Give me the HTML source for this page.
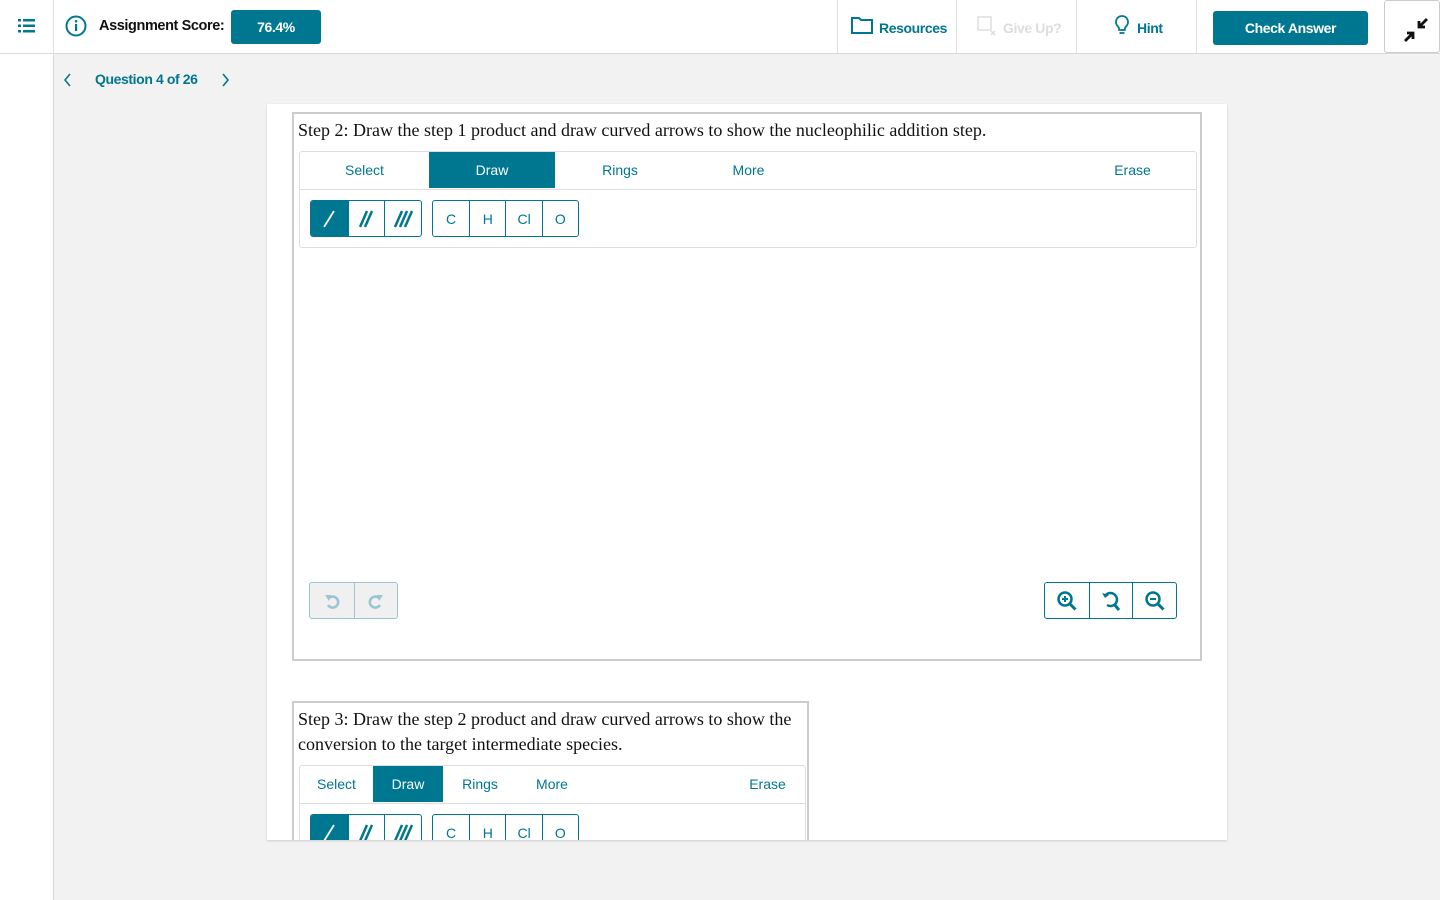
<!DOCTYPE html>
<html><head><style>
*{box-sizing:border-box;margin:0;padding:0}
body{width:1440px;height:900px;background:#f2f2f2;font-family:"Liberation Sans",sans-serif;position:relative;overflow:hidden;color:#007791}
.abs{position:absolute}
.top{left:0;top:0;width:1440px;height:54px;background:#fff;border-bottom:1px solid #d9d9d9}
.side{left:0;top:54px;width:54px;height:846px;background:#fff;border-right:1px solid #d9d9d9}
.vl{position:absolute;top:0;width:1px;height:53px;background:#e0e0e0}
.tb{font-weight:bold;font-size:14px;letter-spacing:-0.4px}
.card{left:267px;top:104px;width:960px;height:736px;background:#fff;overflow:hidden;box-shadow:0 1px 2px #ccc}
.box{position:absolute;border:2px solid #ccc;background:#fff}
.title{font-family:"Liberation Serif",serif;color:#111;font-size:18px;line-height:25px;position:absolute;left:4px}
.tool{position:absolute;border:1px solid #ddd;border-radius:3px}
.tab{position:absolute;top:0;height:36px;line-height:36px;text-align:center;font-size:14px;color:#007791}
.tab.on{background:#007791;color:#fff}
.grp{position:absolute;height:37px;border:1px solid #007791;border-radius:3px;display:flex;overflow:hidden}
.grp div{width:37px;border-left:1px solid #007791;display:flex;align-items:center;justify-content:center;font-size:14px;color:#007791}
.grp div:first-child{border-left:none}
.grp div.on{background:#007791}
</style></head><body>
<div class="abs top">
  <div class="vl" style="left:53px"></div>
  <svg class="abs" style="left:18px;top:18px" width="18" height="16" fill="#007791"><rect x="0" y="1" width="3" height="2.5"/><rect x="5" y="1" width="12" height="2.5"/><rect x="0" y="6.5" width="3" height="2.5"/><rect x="5" y="6.5" width="12" height="2.5"/><rect x="0" y="12" width="3" height="2.5"/><rect x="5" y="12" width="12" height="2.5"/></svg>
  <svg class="abs" style="left:65px;top:15px" width="22" height="22"><circle cx="11" cy="11" r="9.5" fill="none" stroke="#007791" stroke-width="2"/><rect x="10" y="9" width="2.2" height="7" fill="#007791"/><circle cx="11.1" cy="6.3" r="1.3" fill="#007791"/></svg>
  <div class="abs tb" style="left:99px;top:18px;color:#111;font-size:14.5px">Assignment Score:</div>
  <div class="abs tb" style="left:231px;top:10px;width:90px;height:34px;background:#007791;color:#fff;border-radius:3px;text-align:center;line-height:34px">76.4%</div>
  <div class="vl" style="left:837px"></div>
  <div class="vl" style="left:956px"></div>
  <div class="vl" style="left:1076px"></div>
  <div class="vl" style="left:1196px"></div>
  <svg class="abs" style="left:851px;top:16px" width="22" height="18"><path d="M1 2h7l2 2h11v13H1z" fill="none" stroke="#007791" stroke-width="2"/></svg>
  <div class="abs tb" style="left:879px;top:20px">Resources</div>
  <svg class="abs" style="left:977px;top:16px" width="20" height="20"><rect x="1" y="1" width="13" height="13" fill="none" stroke="#ddd" stroke-width="1.5"/><path d="M14 15l4 4M18 15l-4 4" stroke="#ddd" stroke-width="1.5"/></svg>
  <div class="abs tb" style="left:1003px;top:20px;color:#ddd">Give Up?</div>
  <svg class="abs" style="left:1114px;top:15px" width="16" height="22"><path d="M8 1a6 6 0 0 0-4 10.5c1 1 1.2 2 1.2 3.5h5.6c0-1.5.2-2.5 1.2-3.5A6 6 0 0 0 8 1z" fill="none" stroke="#007791" stroke-width="1.8"/><path d="M5.5 18h5" stroke="#007791" stroke-width="1.8"/></svg>
  <div class="abs tb" style="left:1137px;top:20px">Hint</div>
  <div class="abs tb" style="left:1213px;top:11px;width:155px;height:34px;background:#007791;color:#fff;border-radius:3px;text-align:center;line-height:34px">Check Answer</div>
  <div class="abs" style="left:1384px;top:0;width:56px;height:53px;border:1px solid #ccc;border-radius:3px;background:#fff"></div>
  <svg class="abs" style="left:1403px;top:17px" width="26" height="26"><path d="M24 2l-8 8M16 4v6h6" stroke="#111" stroke-width="2.8" fill="none"/><path d="M2 24l8-8M10 22v-6H4" stroke="#111" stroke-width="2.8" fill="none"/></svg>
</div>
<div class="abs side"></div>
<svg class="abs" style="left:62px;top:72px" width="10" height="16"><path d="M8 2L3 8l5 6" stroke="#007791" stroke-width="1.6" fill="none"/></svg>
<div class="abs tb" style="left:95px;top:71px">Question 4 of 26</div>
<svg class="abs" style="left:221px;top:72px" width="10" height="16"><path d="M2 2l5 6-5 6" stroke="#007791" stroke-width="1.6" fill="none"/></svg>

<div class="abs card">
  <div class="box" style="left:25px;top:8px;width:910px;height:549px">
    <div class="title" style="top:4px">Step 2: Draw the step 1 product and draw curved arrows to show the nucleophilic addition step.</div>
    <div class="tool" style="left:5px;top:37px;width:898px;height:97px">
      <div class="tab" style="left:0;width:129px">Select</div>
      <div class="tab on" style="left:129px;width:126px">Draw</div>
      <div class="tab" style="left:255px;width:130px">Rings</div>
      <div class="tab" style="left:385px;width:127px">More</div>
      <div class="tab" style="left:770px;width:125px">Erase</div>
      <div style="position:absolute;left:0;top:37px;width:896px;border-top:1px solid #ddd"></div>
      <div class="grp" style="left:10px;top:48px;width:112px">
        <div class="on"><svg width="14" height="20"><path d="M12 2L2 18" stroke="#fff" stroke-width="1.8"/></svg></div>
        <div><svg width="16" height="20"><path d="M9 2L2 18M14 2L7 18" stroke="#007791" stroke-width="2.5"/></svg></div>
        <div><svg width="20" height="20"><path d="M9 2L2 18M14 2L7 18M19 2L12 18" stroke="#007791" stroke-width="2.5"/></svg></div>
      </div>
      <div class="grp" style="left:132px;top:48px;width:147px"><div>C</div><div>H</div><div>Cl</div><div>O</div></div>
    </div>
    <div class="grp" style="left:15px;top:468px;width:89px;border-color:#9cc5d1;background:#f0f0f0">
      <div style="width:44px;border-color:#9cc5d1"><svg width="18" height="20"><path d="M6 7a5.5 5.5 0 1 1-1 7" fill="none" stroke="#9cc5d1" stroke-width="2.6"/><path d="M2 4l6 0-2 6z" fill="#9cc5d1"/></svg></div>
      <div style="width:44px;border-color:#9cc5d1"><svg width="18" height="20"><path d="M12 7a5.5 5.5 0 1 0 1 7" fill="none" stroke="#9cc5d1" stroke-width="2.6"/><path d="M16 4l-6 0 2 6z" fill="#9cc5d1"/></svg></div>
    </div>
    <div class="grp" style="left:750px;top:468px;width:133px;height:37px">
      <div style="width:44px"><svg width="22" height="22"><circle cx="9" cy="9" r="6.5" fill="none" stroke="#007791" stroke-width="2.5"/><path d="M13.5 13.5l6 6" stroke="#007791" stroke-width="3"/><path d="M6 9h6M9 6v6" stroke="#007791" stroke-width="2"/></svg></div>
      <div style="width:44px"><svg width="22" height="22"><path d="M5 6a6.5 6.5 0 1 1 2 9" fill="none" stroke="#007791" stroke-width="2.5"/><path d="M2 3l3 5 4-3z" fill="#007791"/><path d="M14 14l5 6" stroke="#007791" stroke-width="3"/></svg></div>
      <div style="width:44px"><svg width="22" height="22"><circle cx="9" cy="9" r="6.5" fill="none" stroke="#007791" stroke-width="2.5"/><path d="M13.5 13.5l6 6" stroke="#007791" stroke-width="3"/><path d="M6 9h6" stroke="#007791" stroke-width="2"/></svg></div>
    </div>
  </div>
  <div class="box" style="left:25px;top:597px;width:517px;height:200px">
    <div class="title" style="top:4px">Step 3: Draw the step 2 product and draw curved arrows to show the conversion to the target intermediate species.</div>
    <div class="tool" style="left:5px;top:62px;width:507px;height:120px">
      <div class="tab" style="left:0;width:73px">Select</div>
      <div class="tab on" style="left:73px;width:70px">Draw</div>
      <div class="tab" style="left:143px;width:74px">Rings</div>
      <div class="tab" style="left:217px;width:70px">More</div>
      <div class="tab" style="left:430px;width:75px">Erase</div>
      <div style="position:absolute;left:0;top:37px;width:505px;border-top:1px solid #ddd"></div>
      <div class="grp" style="left:10px;top:48px;width:112px">
        <div class="on"><svg width="14" height="20"><path d="M12 2L2 18" stroke="#fff" stroke-width="1.8"/></svg></div>
        <div><svg width="16" height="20"><path d="M9 2L2 18M14 2L7 18" stroke="#007791" stroke-width="2.5"/></svg></div>
        <div><svg width="20" height="20"><path d="M9 2L2 18M14 2L7 18M19 2L12 18" stroke="#007791" stroke-width="2.5"/></svg></div>
      </div>
      <div class="grp" style="left:132px;top:48px;width:147px"><div>C</div><div>H</div><div>Cl</div><div>O</div></div>
    </div>
  </div>
</div>
</body></html>
